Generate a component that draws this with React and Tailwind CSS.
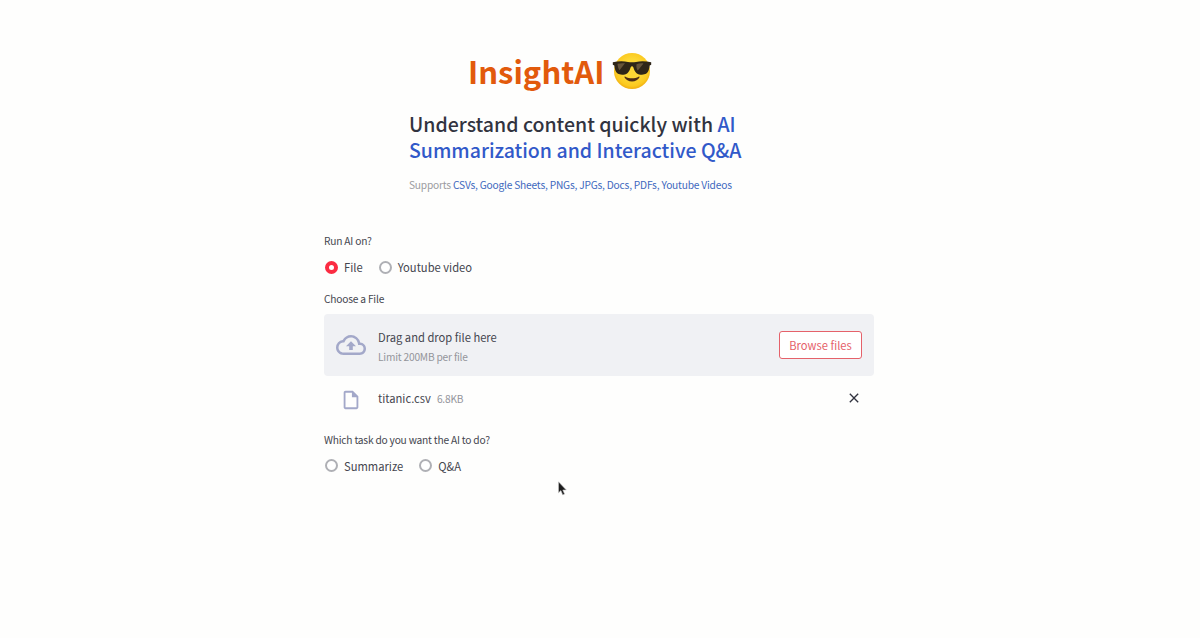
import { useState } from "react";
import { MdClose, MdOutlineCloudUpload, MdOutlineInsertDriveFile } from "react-icons/md";

const SunglassesFace = () => (
  <svg viewBox="0 0 40 38" className="w-10 h-[38px]" aria-hidden="true">
    <defs>
      <radialGradient id="face" cx="0.5" cy="0.45" r="0.55">
        <stop offset="0.5" stopColor="#fdd835" />
        <stop offset="0.85" stopColor="#fbc920" />
        <stop offset="1" stopColor="#f0ae10" />
      </radialGradient>
    </defs>
    <circle cx="20" cy="19" r="18" fill="url(#face)" />
    <path
      d="M13.400 24.700c2 1.100 4.200 1.500 6.600 1.500s4.600-.4 6.600-1.500c.6-.3 1.100.1.800.8-1.100 2.400-3.900 3.900-7.400 3.900s-6.300-1.500-7.400-3.900c-.3-.7.200-1.100.8-.8z"
      fill="#4e2e16"
    />
    {/* glasses */}
    <path
      d="M.8 10.200c5-1.100 10.600-1.300 15.200-.3 2.600.6 5.400.6 8 0 4.600-1 10.200-.8 15.200.3v2.600l-1.500.7c-.5 3.900-1.400 6.700-3.300 8.100-2.700 1.700-7.200 1.500-9.800-.4-2-1.600-2.700-4.300-3.400-6.200-.4-.9-2-.9-2.400 0-.7 1.900-1.400 4.600-3.400 6.200-2.600 1.900-7.100 2.100-9.800.4-1.900-1.400-2.800-4.200-3.300-8.100l-1.500-.7z"
      fill="#2f2618"
    />
    <path d="M5.500 11.800c2.500-.7 5-.8 7.500-.5l-5.500 7c-1.100-1.500-1.800-3.800-2-6.500z" fill="#66543a" />
    <path d="M24.500 12.200c2-.8 4.500-1 7-.8l-5.700 7.200c-1-1.500-1.700-3.600-1.300-6.400z" fill="#66543a" />
  </svg>
);

const RadioOption = ({ label, checked, onSelect }) => (
  <button onClick={onSelect} className="flex items-center gap-[6px]">
    <span
      className={`block w-[13px] h-[13px] rounded-full ${
        checked ? "border-4 border-[#fb2c42] bg-white" : "border-2 border-[#afb0b5] bg-white"
      }`}
    />
    <span className="text-[11.2px] leading-5">{label}</span>
  </button>
);

const RadioGroup = ({ title, options, value, onChange }) => (
  <div>
    <p className="text-[10.2px] tracking-[-0.2px] leading-[18px]">{title}</p>
    <div className="flex gap-4 mt-[7px] pl-px">
      {options.map((option) => (
        <RadioOption
          key={option}
          label={option}
          checked={option === value}
          onSelect={() => onChange(option)}
        />
      ))}
    </div>
  </div>
);

const App = () => {
  const [source, setSource] = useState("File");
  const [task, setTask] = useState(null);
  const [file, setFile] = useState({ name: "titanic.csv", size: "6.8KB" });

  return (
    <div className="relative h-[638px] overflow-hidden bg-[#fefefd] font-['Noto_Sans_CJK_SC',sans-serif] text-[#45464f]">
      <main className="w-[550px] ml-[324px] pt-[49px]">
        {/* Header */}
        <header className="pl-[85px]">
          <div className="flex items-center gap-2 h-11 pl-[59px]">
            <h1 className="text-[31px] leading-[44px] font-bold text-[#e25a0c] whitespace-nowrap">
              InsightAI
            </h1>
            <SunglassesFace />
          </div>
          <h2 className="mt-[18px] text-[19.5px] leading-[26px] font-medium text-[#31333f] whitespace-nowrap">
            Understand content quickly with <span className="text-[#3159c9]">AI</span>
            <br />
            <span className="text-[#3159c9]">Summarization and Interactive Q&amp;A</span>
          </h2>
          <p className="mt-[13px] text-[10.2px] tracking-[-0.2px] leading-[18px] text-[#9b9b9f] whitespace-nowrap">
            Supports{" "}
            <span className="text-[#4068bd]">
              CSVs, Google Sheets, PNGs, JPGs, Docs, PDFs, Youtube Videos
            </span>
          </p>
        </header>

        <div className="mt-[38px]">
          <RadioGroup
            title="Run AI on?"
            options={["File", "Youtube video"]}
            value={source}
            onChange={setSource}
          />
        </div>

        {/* File upload */}
        <p className="mt-[13px] text-[10.2px] tracking-[-0.2px] leading-[18px]">Choose a File</p>
        <section className="flex items-center h-[62px] mt-[6px] px-3 rounded-[4px] bg-[#f0f1f4]">
          <MdOutlineCloudUpload className="w-[30px] h-[30px] text-[#a3a8c9]" />
          <div className="ml-3 mt-[3px] flex-1">
            <p className="text-[11.2px] leading-5">Drag and drop file here</p>
            <p className="text-[10.2px] tracking-[-0.2px] leading-5 text-[#94959b]">Limit 200MB per file</p>
          </div>
          <button className="w-[83px] h-7 rounded-[3px] border border-[#e5616a] bg-white text-[11.2px] leading-5 text-[#e5616a] whitespace-nowrap">
            Browse files
          </button>
        </section>

        <div className="flex items-center h-[46px] pl-4 pr-3">
          {file && (
            <>
              <MdOutlineInsertDriveFile className="w-[22px] h-[22px] mt-0.5 text-[#a3a8c9]" />
              <span className="ml-4 -mt-0.5 text-[11.2px] leading-5">{file.name}</span>
              <span className="ml-1.5 text-[10.2px] tracking-[-0.2px] leading-5 text-[#94959b]">{file.size}</span>
              <button onClick={() => setFile(null)} aria-label="Remove file" className="ml-auto -mt-[3px]">
                <MdClose className="w-4 h-4 text-[#31333f]" />
              </button>
            </>
          )}
        </div>

        <div className="mt-[8.5px]">
          <RadioGroup
            title="Which task do you want the AI to do?"
            options={["Summarize", "Q&A"]}
            value={task}
            onChange={setTask}
          />
        </div>
      </main>

      {/* Mouse pointer */}
      <svg viewBox="0 0 9 15" className="absolute left-[558px] top-[481px] w-[9px] h-[15px]">
        <path
          d="M.5.800v11l2.400-2.200 1.800 4.300 1.900-.8-1.800-4.100h3.500z"
          fill="#1d1d1d"
          stroke="#c8c8c8"
          strokeWidth="0.6"
        />
      </svg>
    </div>
  );
};

export default App;
